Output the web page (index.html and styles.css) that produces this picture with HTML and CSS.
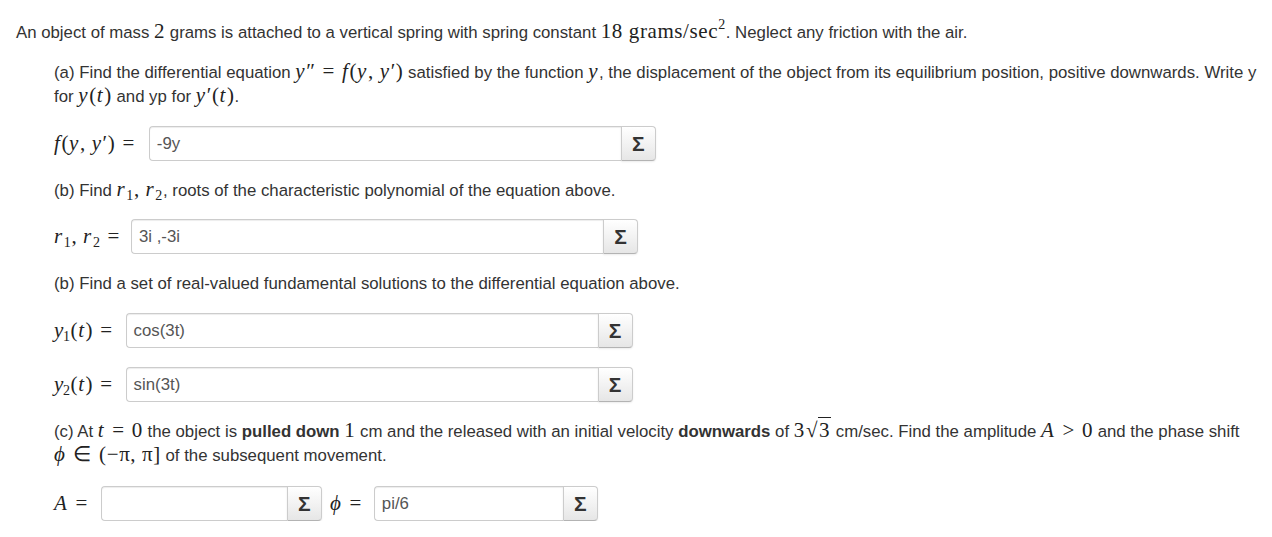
FILE: index.html
```html
<!DOCTYPE html>
<html>
<head>
<meta charset="utf-8">
<link rel="stylesheet" href="styles.css">
</head>
<body>
<div class="page">
  <p class="intro">An object of mass <span class="m">2</span> grams is attached to a vertical spring with spring constant <span class="m">18 grams/sec<sup>2</sup></span>. Neglect any friction with the air.</p>
  <div class="parts">
    <p class="pa">(a) Find the differential equation <span class="m"><i>y</i>″<span class="op">=</span><i>f</i>(<i>y</i>, <i>y</i>′)</span> satisfied by the function <span class="m"><i>y</i></span>, the displacement of the object from its equilibrium position, positive downwards. Write y for <span class="m"><i>y</i>(<i>t</i>)</span> and yp for <span class="m"><i>y</i>′(<i>t</i>)</span>.</p>
    <div class="row r-f">
      <span class="m label label-f"><i>f</i>(<i>y</i>, <i>y</i>′)<span class="op">=</span></span>
      <div class="group wide"><div class="field">-9y</div><div class="sig">Σ</div></div>
    </div>
    <p class="pb1">(b) Find <span class="m"><i>r</i><sub>1</sub>, <i>r</i><sub>2</sub></span>, roots of the characteristic polynomial of the equation above.</p>
    <div class="row r-r">
      <span class="m label label-r"><i>r</i><sub>1</sub>, <i>r</i><sub>2</sub><span class="op">=</span></span>
      <div class="group wide"><div class="field">3i ,-3i</div><div class="sig">Σ</div></div>
    </div>
    <p class="pb2">(b) Find a set of real-valued fundamental solutions to the differential equation above.</p>
    <div class="row r-y1">
      <span class="m label"><i>y</i><sub class="ns">1</sub>(<i>t</i>)<span class="op">=</span></span>
      <div class="group wide"><div class="field">cos(3t)</div><div class="sig">Σ</div></div>
    </div>
    <div class="row r-y2">
      <span class="m label"><i>y</i><sub class="ns">2</sub>(<i>t</i>)<span class="op">=</span></span>
      <div class="group wide"><div class="field">sin(3t)</div><div class="sig">Σ</div></div>
    </div>
    <p class="pc">(c) At <span class="m"><i>t</i><span class="op">=</span>0</span> the object is <b>pulled down</b> <span class="m">1</span> cm and the released with an initial velocity <b>downwards</b> of <span class="m">3<span class="sqrt">√<span class="rad">3</span></span></span> cm/sec. Find the amplitude <span class="m"><i>A</i><span class="op">&gt;</span>0</span> and the phase shift <span class="m"><i>ϕ</i><span class="op">∈</span>(−π, π]</span> of the subsequent movement.</p>
    <div class="row r-a">
      <span class="m label"><i>A</i><span class="op">=</span></span>
      <div class="group narrow"><div class="field"></div><div class="sig">Σ</div></div>
      <span class="m label phi"><i>ϕ</i><span class="op">=</span></span>
      <div class="group narrow2"><div class="field">pi/6</div><div class="sig">Σ</div></div>
    </div>
  </div>
</div>
</body>
</html>
```
FILE: styles.css
```css
html, body {
  margin: 0;
  padding: 0;
  background: #fff;
}
body {
  font-family: "Liberation Sans", Arial, sans-serif;
  font-size: 16.8px;
  line-height: 24px;
  color: #333;
}
.page {
  padding: 21px 6px 0 16px;
}
p {
  margin: 0;
}
.intro {
  margin-bottom: 16px;
}
.parts {
  padding-left: 38px;
  display: flex;
  flex-direction: column;
}
.r-f { margin-top: 17px; }
.pb1 { margin-top: 18px; }
.r-r { margin-top: 16px; }
.pb2 { margin-top: 18px; }
.r-y1 { margin-top: 17px; }
.r-y2 { margin-top: 19px; }
.pc { margin-top: 18px; }
.r-a { margin-top: 18px; }
.m {
  font-family: "Liberation Serif", "Times New Roman", serif;
  font-size: 21px;
  line-height: 1;
  letter-spacing: 0.6px;
  color: #222;
  white-space: nowrap;
}
.m i {
  font-style: italic;
  padding-right: 1px;
}
.m sup {
  font-size: 14px;
  vertical-align: 9px;
  line-height: 0;
}
.m sub {
  font-size: 14px;
  vertical-align: -4px;
  line-height: 0;
}
.m sub.ns {
  margin-left: -2px;
}
.op {
  margin: 0 7px;
}
.sqrt {
  margin-left: 1px;
}
.rad {
  border-top: 1px solid #222;
  padding: 0 1px;
}
.row {
  display: flex;
  align-items: center;
  height: 35px;
}
.label {
  margin-right: 6px;
}
.label-f {
  margin-right: 7px;
}
.label-r {
  margin-right: 4px;
}
.phi {
  margin-left: 8px;
  margin-right: 5px;
}
.group {
  display: flex;
  height: 35px;
  box-sizing: border-box;
}
.wide {
  width: 507px;
}
.narrow {
  width: 221px;
}
.narrow2 {
  width: 224px;
}
.field {
  flex: 1;
  border: 1px solid #ccc;
  border-right: none;
  border-radius: 4px 0 0 4px;
  box-shadow: inset 0 1px 1px rgba(0,0,0,0.075);
  padding: 0 7px;
  display: flex;
  align-items: center;
  color: #555;
  font-size: 16.8px;
  background: #fff;
}
.sig {
  width: 35px;
  box-sizing: border-box;
  border: 1px solid #ccc;
  border-bottom-color: #b3b3b3;
  border-radius: 0 4px 4px 0;
  background: linear-gradient(#ffffff, #e6e6e6);
  box-shadow: 0 1px 2px rgba(0,0,0,0.08);
  display: flex;
  align-items: center;
  justify-content: center;
  font-weight: bold;
  font-size: 21px;
  color: #333;
}
```
